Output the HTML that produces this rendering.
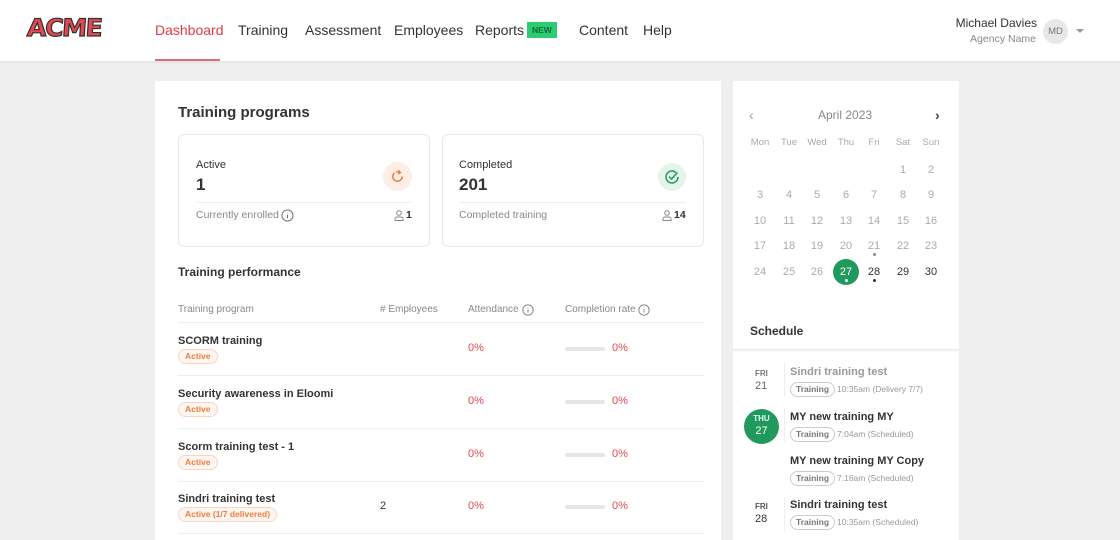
<!DOCTYPE html>
<html><head><meta charset="utf-8"><style>
*{box-sizing:border-box;margin:0;padding:0}
html,body{width:1120px;height:540px;overflow:hidden}
body{background:#efefef;font-family:"Liberation Sans",sans-serif;color:#333;position:relative}
.a{position:absolute;white-space:nowrap}
.hdr{position:absolute;left:0;top:0;width:1120px;height:61px;background:#fff;box-shadow:0 1px 3px rgba(0,0,0,.08)}
.nav{font-size:14px;color:#333;top:22px}
.card{position:absolute;background:#fff}
.box{position:absolute;border:1px solid #e8e8e8;border-radius:6px;background:#fff}
.g{color:#888}
.badge{position:absolute;font-size:8.5px;font-weight:bold;color:#f47a3c;border:1px solid #fbd3bf;background:#fff7f2;border-radius:8px;padding:2px 6px;line-height:9px}
.line{position:absolute;left:178px;width:526px;height:1px;background:#eee}
.pct{color:#e5484d;font-size:11px}
.bar{position:absolute;width:40px;height:4px;border-radius:2px;background:#e6e6e6}
.cal{font-size:11px;color:#aaa;text-align:center;width:20px;margin-left:-10px}
.tag{position:absolute;font-size:8.5px;font-weight:bold;color:#777;border:1px solid #ccc;border-radius:8px;padding:2px 5px;line-height:9px}
.tm{font-size:8.5px;color:#999}
</style></head><body>
<div class="hdr"></div>
<div class="a" style="left:29px;top:14px;font-family:'DejaVu Sans';font-weight:900;font-size:24px;color:#e5484d;letter-spacing:-1.5px;-webkit-text-stroke:1.2px #333;transform:skewX(-4deg) scaleX(1.05)">ACME</div>
<div class="a nav" style="left:155px;color:#e03b47">Dashboard</div>
<div class="a" style="left:155px;top:59px;width:65px;height:2px;background:#e36b74"></div>
<div class="a nav" style="left:238px">Training</div>
<div class="a nav" style="left:305px">Assessment</div>
<div class="a nav" style="left:394px">Employees</div>
<div class="a nav" style="left:475px">Reports</div>
<div class="a" style="left:527px;top:22px;background:#2ecc71;color:#0b6b3a;font-size:8.5px;font-weight:bold;padding:3px 5px;line-height:10px">NEW</div>
<div class="a nav" style="left:579px">Content</div>
<div class="a nav" style="left:643px">Help</div>
<div class="a" style="left:940px;top:16px;width:97px;text-align:right;font-size:12px;color:#333">Michael Davies</div>
<div class="a" style="left:940px;top:33px;width:96px;text-align:right;font-size:10.5px;color:#888">Agency Name</div>
<div class="a" style="left:1043px;top:19px;width:25px;height:25px;border-radius:50%;background:#e8e8e8;color:#777;font-size:9.5px;text-align:center;line-height:25px">MD</div>
<div class="a" style="left:1076px;top:29px;border:4px solid transparent;border-top:4px solid #999"></div>

<div class="card" style="left:155px;top:81px;width:566px;height:459px"></div>
<div class="a" style="left:178px;top:104px;font-size:15px;font-weight:bold">Training programs</div>
<div class="box" style="left:178px;top:134px;width:252px;height:113px"></div>
<div class="a" style="left:196px;top:159px;font-size:11px">Active</div>
<div class="a" style="left:196px;top:175px;font-size:17px;font-weight:bold">1</div>
<div class="a" style="left:383px;top:162px;width:29px;height:29px;border-radius:50%;background:#fdeee6"></div>
<svg class="a" style="left:390px;top:169px" width="15" height="15" viewBox="0 0 16 16" fill="none" stroke="#f47a3c" stroke-width="1.6"><path d="M13 8a5 5 0 1 1-2.5-4.3" stroke-dasharray="20 2"/><path d="M9 1.5l2 2.2-2.2 1.6" /></svg>
<div class="a" style="left:196px;top:202px;width:216px;height:1px;background:#eee"></div>
<div class="a g" style="left:196px;top:209px;font-size:10.5px">Currently enrolled</div>
<svg class="a" style="left:281px;top:209px" width="13" height="13" viewBox="0 0 14 14" fill="none" stroke="#666"><circle cx="7" cy="7" r="6"/><path d="M7 6v4M7 4v.5"/></svg>
<svg class="a" style="left:394px;top:210px" width="10" height="11" viewBox="0 0 10 11" fill="none" stroke="#888"><circle cx="5" cy="3" r="2.3"/><path d="M1 10.5v-1.5a2 2 0 0 1 2-2h4a2 2 0 0 1 2 2v1.5z"/></svg>
<div class="a" style="left:406px;top:209px;font-size:10.5px;font-weight:bold">1</div>

<div class="box" style="left:442px;top:134px;width:262px;height:113px"></div>
<div class="a" style="left:459px;top:159px;font-size:11px">Completed</div>
<div class="a" style="left:459px;top:175px;font-size:17px;font-weight:bold">201</div>
<div class="a" style="left:658px;top:163px;width:28px;height:28px;border-radius:50%;background:#e5f4ec"></div>
<svg class="a" style="left:664px;top:169px" width="16" height="16" viewBox="0 0 16 16" fill="none" stroke="#1f9a5c" stroke-width="1.5"><path d="M14 8a6 6 0 1 1-2-4.5"/><path d="M5 7.5l2.5 2.5 6-6.5"/></svg>
<div class="a" style="left:459px;top:202px;width:227px;height:1px;background:#eee"></div>
<div class="a g" style="left:459px;top:209px;font-size:10.5px">Completed training</div>
<svg class="a" style="left:662px;top:210px" width="10" height="11" viewBox="0 0 10 11" fill="none" stroke="#888"><circle cx="5" cy="3" r="2.3"/><path d="M1 10.5v-1.5a2 2 0 0 1 2-2h4a2 2 0 0 1 2 2v1.5z"/></svg>
<div class="a" style="left:674px;top:209px;font-size:10.5px;font-weight:bold">14</div>

<div class="a" style="left:178px;top:265px;font-size:12px;font-weight:bold">Training performance</div>
<div class="a g" style="left:178px;top:304px;font-size:10px">Training program</div>
<div class="a g" style="left:380px;top:304px;font-size:10px"># Employees</div>
<div class="a g" style="left:468px;top:304px;font-size:10px">Attendance</div>
<svg class="a" style="left:522px;top:304px" width="12" height="12" viewBox="0 0 14 14" fill="none" stroke="#777"><circle cx="7" cy="7" r="6"/><path d="M7 6v4M7 4v.5"/></svg>
<div class="a g" style="left:565px;top:304px;font-size:10px">Completion rate</div>
<svg class="a" style="left:638px;top:304px" width="12" height="12" viewBox="0 0 14 14" fill="none" stroke="#777"><circle cx="7" cy="7" r="6"/><path d="M7 6v4M7 4v.5"/></svg>
<div class="line" style="top:322px"></div>

<div class="a" style="left:178px;top:335px;font-size:11px;font-weight:bold">SCORM training</div>
<div class="badge" style="left:178px;top:349px">Active</div>
<div class="a pct" style="left:468px;top:342px">0%</div><div class="bar" style="left:565px;top:347px"></div><div class="a pct" style="left:612px;top:342px">0%</div>
<div class="line" style="top:375px"></div>

<div class="a" style="left:178px;top:388px;font-size:11px;font-weight:bold">Security awareness in Eloomi</div>
<div class="badge" style="left:178px;top:402px">Active</div>
<div class="a pct" style="left:468px;top:395px">0%</div><div class="bar" style="left:565px;top:400px"></div><div class="a pct" style="left:612px;top:395px">0%</div>
<div class="line" style="top:428px"></div>

<div class="a" style="left:178px;top:441px;font-size:11px;font-weight:bold">Scorm training test - 1</div>
<div class="badge" style="left:178px;top:455px">Active</div>
<div class="a pct" style="left:468px;top:448px">0%</div><div class="bar" style="left:565px;top:453px"></div><div class="a pct" style="left:612px;top:448px">0%</div>
<div class="line" style="top:481px"></div>

<div class="a" style="left:178px;top:493px;font-size:11px;font-weight:bold">Sindri training test</div>
<div class="badge" style="left:178px;top:507px">Active (1/7 delivered)</div>
<div class="a" style="left:380px;top:500px;font-size:11px">2</div>
<div class="a pct" style="left:468px;top:500px">0%</div><div class="bar" style="left:565px;top:505px"></div><div class="a pct" style="left:612px;top:500px">0%</div>
<div class="line" style="top:533px"></div>

<div class="card" style="left:733px;top:81px;width:226px;height:459px"></div>
<div class="a" style="left:749px;top:107px;color:#999;font-size:14px">‹</div>
<div class="a" style="left:935px;top:107px;color:#444;font-size:14px;font-weight:bold">›</div>
<div class="a" style="left:818px;top:108px;font-size:12px;color:#888">April 2023</div>
<div class="a cal" style="left:760px;top:137px;font-size:9.5px">Mon</div>
<div class="a cal" style="left:789px;top:137px;font-size:9.5px">Tue</div>
<div class="a cal" style="left:817px;top:137px;font-size:9.5px">Wed</div>
<div class="a cal" style="left:846px;top:137px;font-size:9.5px">Thu</div>
<div class="a cal" style="left:874px;top:137px;font-size:9.5px">Fri</div>
<div class="a cal" style="left:903px;top:137px;font-size:9.5px">Sat</div>
<div class="a cal" style="left:931px;top:137px;font-size:9.5px">Sun</div>
<div class="a cal" style="left:903px;top:164px">1</div><div class="a cal" style="left:931px;top:164px">2</div>
<div class="a cal" style="left:760px;top:189px">3</div><div class="a cal" style="left:789px;top:189px">4</div><div class="a cal" style="left:817px;top:189px">5</div><div class="a cal" style="left:846px;top:189px">6</div><div class="a cal" style="left:874px;top:189px">7</div><div class="a cal" style="left:903px;top:189px">8</div><div class="a cal" style="left:931px;top:189px">9</div>
<div class="a cal" style="left:760px;top:215px">10</div><div class="a cal" style="left:789px;top:215px">11</div><div class="a cal" style="left:817px;top:215px">12</div><div class="a cal" style="left:846px;top:215px">13</div><div class="a cal" style="left:874px;top:215px">14</div><div class="a cal" style="left:903px;top:215px">15</div><div class="a cal" style="left:931px;top:215px">16</div>
<div class="a cal" style="left:760px;top:240px">17</div><div class="a cal" style="left:789px;top:240px">18</div><div class="a cal" style="left:817px;top:240px">19</div><div class="a cal" style="left:846px;top:240px">20</div><div class="a cal" style="left:874px;top:240px">21</div><div class="a cal" style="left:903px;top:240px">22</div><div class="a cal" style="left:931px;top:240px">23</div>
<div class="a" style="left:873px;top:253px;width:3px;height:3px;border-radius:50%;background:#888"></div>
<div class="a" style="left:833px;top:259px;width:26px;height:26px;border-radius:50%;background:#1f9a5c"></div>
<div class="a cal" style="left:760px;top:266px">24</div><div class="a cal" style="left:789px;top:266px">25</div><div class="a cal" style="left:817px;top:266px">26</div><div class="a cal" style="left:846px;top:266px;color:#fff">27</div><div class="a cal" style="left:874px;top:266px;color:#333">28</div><div class="a cal" style="left:903px;top:266px;color:#333">29</div><div class="a cal" style="left:931px;top:266px;color:#333">30</div>
<div class="a" style="left:845px;top:279px;width:3px;height:3px;border-radius:50%;background:#fff"></div>
<div class="a" style="left:873px;top:279px;width:3px;height:3px;border-radius:50%;background:#333"></div>
<div class="a" style="left:750px;top:324px;font-size:12px;font-weight:bold">Schedule</div>
<div class="a" style="left:733px;top:349px;width:226px;height:3px;background:linear-gradient(#e6e6e6,#fff)"></div>

<div class="a" style="left:784px;top:363px;width:1px;height:34px;background:#eee"></div>
<div class="a" style="left:784px;top:408px;width:1px;height:34px;background:#eee"></div>
<div class="a" style="left:784px;top:497px;width:1px;height:34px;background:#eee"></div>
<div class="a" style="left:755px;top:369px;font-size:8px;font-weight:bold;color:#777">FRI</div>
<div class="a" style="left:755px;top:380px;font-size:11px;color:#666">21</div>
<div class="a" style="left:790px;top:366px;font-size:11px;font-weight:bold;color:#999">Sindri training test</div>
<div class="tag" style="left:790px;top:382px">Training</div><div class="a tm" style="left:837px;top:384px">10:35am (Delivery 7/7)</div>
<div class="a" style="left:744px;top:409px;width:35px;height:35px;border-radius:50%;background:#1f9a5c"></div>
<div class="a" style="left:744px;top:414px;width:35px;text-align:center;font-size:8px;font-weight:bold;color:#dff">THU</div>
<div class="a" style="left:744px;top:425px;width:35px;text-align:center;font-size:11px;color:#fff">27</div>
<div class="a" style="left:790px;top:411px;font-size:11px;font-weight:bold">MY new training MY</div>
<div class="tag" style="left:790px;top:427px">Training</div><div class="a tm" style="left:837px;top:429px">7:04am (Scheduled)</div>
<div class="a" style="left:790px;top:455px;font-size:11px;font-weight:bold">MY new training MY Copy</div>
<div class="tag" style="left:790px;top:471px">Training</div><div class="a tm" style="left:837px;top:473px">7:16am (Scheduled)</div>
<div class="a" style="left:755px;top:502px;font-size:8px;font-weight:bold;color:#555">FRI</div>
<div class="a" style="left:755px;top:513px;font-size:11px;color:#333">28</div>
<div class="a" style="left:790px;top:499px;font-size:11px;font-weight:bold">Sindri training test</div>
<div class="tag" style="left:790px;top:515px">Training</div><div class="a tm" style="left:837px;top:517px">10:35am (Scheduled)</div>
</body></html>
